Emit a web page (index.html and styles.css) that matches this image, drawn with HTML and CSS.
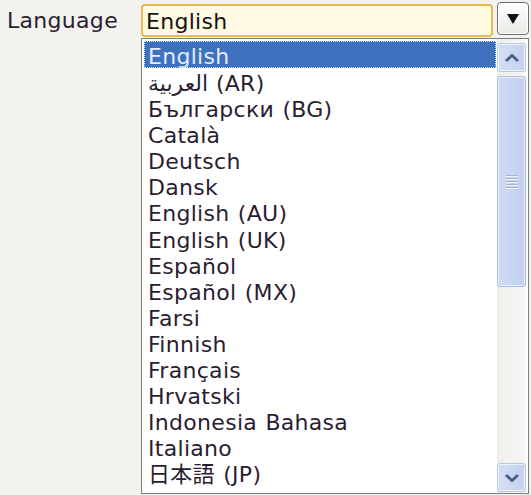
FILE: index.html
```html
<!DOCTYPE html>
<html lang="en">
<head>
<meta charset="utf-8">
<title>Language</title>
<link rel="stylesheet" href="styles.css">
</head>
<body>
<div class="form">
  <div class="label">Language</div>
  <div class="field">
    <div class="combo">
      <div class="input">English</div>
      <div class="btn"><svg width="12" height="10" viewBox="0 0 12 10"><path d="M0 0 H12 L6 10 Z" fill="#111"/></svg></div>
    </div>
    <div class="list">
      <div class="items">
        <div class="item selected">English</div>
        <div class="item"><span dir="rtl">العربية</span> (AR)</div>
        <div class="item">Български (BG)</div>
        <div class="item">Català</div>
        <div class="item">Deutsch</div>
        <div class="item">Dansk</div>
        <div class="item">English (AU)</div>
        <div class="item">English (UK)</div>
        <div class="item">Español</div>
        <div class="item">Español (MX)</div>
        <div class="item">Farsi</div>
        <div class="item">Finnish</div>
        <div class="item">Français</div>
        <div class="item">Hrvatski</div>
        <div class="item">Indonesia Bahasa</div>
        <div class="item">Italiano</div>
        <div class="item">日本語 (JP)</div>
      </div>
      <div class="scrollbar">
        <div class="sbtn"><svg width="16" height="10" viewBox="0 0 16 10"><path d="M2 8 L8 2.5 L14 8" fill="none" stroke="#4e6288" stroke-width="3"/></svg></div>
        <div class="thumb"><div class="grip"><span></span><span></span><span></span><span></span><span></span></div></div>
        <div class="track"></div>
        <div class="sbtn"><svg width="16" height="10" viewBox="0 0 16 10"><path d="M2 2 L8 7.5 L14 2" fill="none" stroke="#4e6288" stroke-width="3"/></svg></div>
      </div>
    </div>
  </div>
</div>
</body>
</html>
```
FILE: styles.css
```css
html, body {
  margin: 0;
  padding: 0;
}
body {
  background: #f2f2ef;
  font-family: "DejaVu Sans", Verdana, "Noto Sans CJK JP", sans-serif;
  font-size: 22px;
  letter-spacing: 0.3px;
  word-spacing: 1px;
  color: #2b1d31;
  width: 531px;
  height: 495px;
  overflow: hidden;
}
.form {
  display: flex;
  padding: 2px 0 0 7px;
}
.label {
  width: 134px;
  line-height: 33px;
  padding-top: 2px;
}
.field {
  width: 388px;
  display: flex;
  flex-direction: column;
}
.combo {
  display: flex;
  align-items: flex-start;
  gap: 4px;
  height: 33px;
}
.input {
  width: 348px;
  height: 29px;
  margin-top: 2px;
  border: 2px solid #e7bb4c;
  border-radius: 4px;
  background: #fffbe2;
  color: #141014;
  line-height: 31px;
  padding-left: 3px;
  box-sizing: content-box;
}
.btn {
  width: 30px;
  height: 31px;
  border: 1px solid #6e6e6e;
  border-radius: 4px;
  background: linear-gradient(#ffffff, #e9e9e6);
  display: flex;
  align-items: center;
  justify-content: center;
  box-shadow: inset 0 0 0 1px #fff;
}
.list {
  margin-top: 3px;
  height: 454px;
  border: 1px solid #7d7d7d;
  background: #fff;
  display: flex;
}
.items {
  flex: 1;
  padding: 2px 0 0 2px;
}
.item {
  height: 26.1px;
  line-height: 31px;
  padding-left: 4px;
  white-space: nowrap;
  font-family: "DejaVu Sans", "Noto Sans CJK JP", sans-serif;
}
.item.selected {
  height: 27px;
  background: #3e72bf;
  color: #e3ecfb;
  outline: 1px dotted #d8e4f6;
  outline-offset: -1px;
}
.scrollbar {
  width: 29px;
  margin: 0 2px 0 1px;
  padding: 4px 0 1px;
  display: flex;
  flex-direction: column;
  background: linear-gradient(90deg, #eeeeeb, #f7f7f5);
}
.sbtn {
  height: 27px;
  border: 1px solid #b8c7e6;
  border-radius: 3px;
  background: linear-gradient(90deg, #d3def4, #c4d2ee);
  box-shadow: inset 0 0 0 1px #eef3fc;
  display: flex;
  align-items: center;
  justify-content: center;
}
.thumb {
  margin-top: 4px;
  height: 209px;
  border: 1px solid #a9bce3;
  border-radius: 3px;
  background: linear-gradient(90deg, #d0dbf3, #c3d1ef);
  box-shadow: inset 0 0 0 1px #e9effb;
  display: flex;
  align-items: center;
  justify-content: center;
}
.grip {
  display: flex;
  flex-direction: column;
  gap: 2px;
}
.grip span {
  display: block;
  width: 12px;
  height: 1px;
  background: #a2b4dc;
  box-shadow: 0 1px 0 #eef3fc;
}
.track {
  flex: 1;
}
```
